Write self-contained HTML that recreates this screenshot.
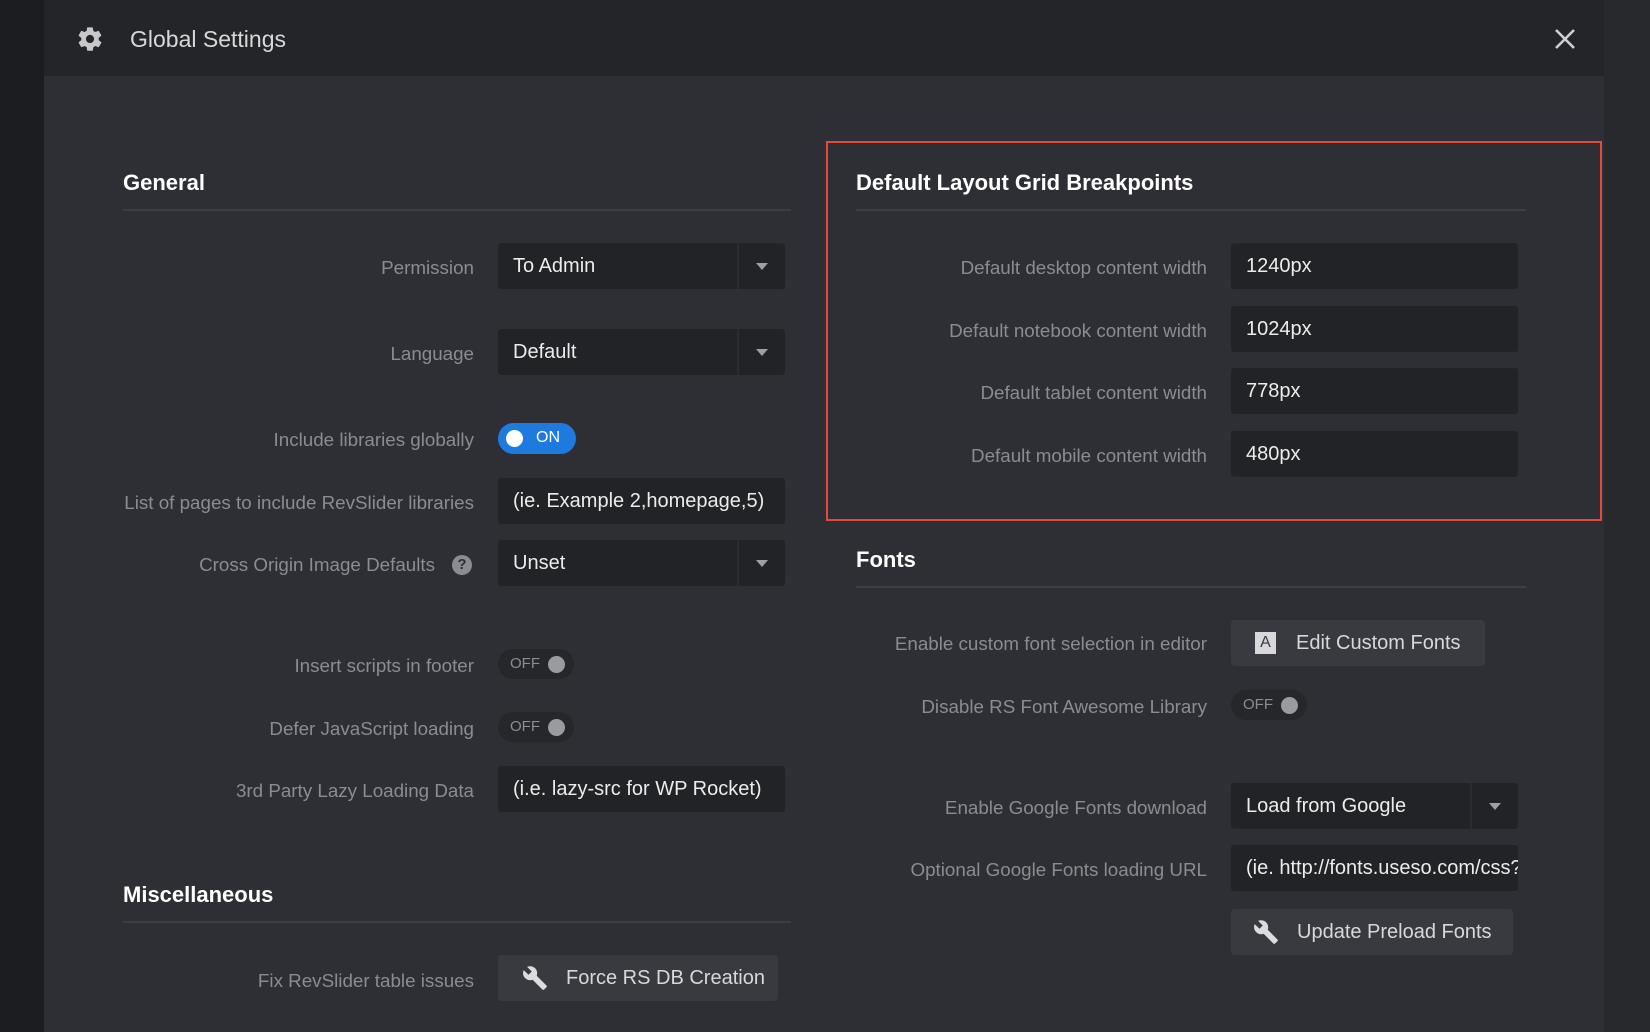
<!DOCTYPE html>
<html><head><meta charset="utf-8"><style>
*{box-sizing:border-box;margin:0;padding:0}
body{width:1650px;height:1032px;overflow:hidden;background:#1d1e21;font-family:"Liberation Sans",sans-serif;position:relative}
.side{position:absolute;left:0;top:0;width:44px;height:1032px;background:#1c1d20}
.rside{position:absolute;left:1604px;top:0;width:46px;height:1032px;background:#28292d}
.modal{position:absolute;left:44px;top:0;width:1560px;height:1032px;background:#2e2f34}
.hdr{position:absolute;left:0;top:0;width:1560px;height:76px;background:#242529}
.title{position:absolute;left:86px;top:26px;font-size:23px;color:#d8d8da}
.abs{position:absolute}
.h2{position:absolute;font-size:22px;font-weight:bold;color:#fff}
.line{position:absolute;height:2px;background:#3d3e44}
.lbl{position:absolute;font-size:18.8px;color:#8b8c91;text-align:right;transform:translateY(-50%);white-space:nowrap}
.inp{position:absolute;height:46px;background:#222327;color:#ececec;font-size:20px;line-height:46px;padding-left:15px;border-radius:3px;overflow:hidden;white-space:nowrap;transform:translateY(-50%)}
.dd{position:absolute;right:0;top:0;width:48px;height:46px;border-left:2px solid #2b2c31}
.dd:after{content:"";position:absolute;left:17px;top:20px;border:6px solid transparent;border-top:7px solid #a0a0a4;border-bottom:0}
.off{position:absolute;width:76px;height:30px;border-radius:15px;background:#26272b;transform:translateY(-50%);color:#8b8c91;font-size:15px;line-height:30px;padding-left:12px}
.off:after{content:"";position:absolute;right:9px;top:7px;width:17px;height:17px;border-radius:50%;background:#9a9b9f}
.btn{position:absolute;background:#393a40;color:#d8d8da;font-size:20px;border-radius:4px;display:flex;align-items:center}
.btn svg{margin-right:18px}
</style></head><body>
<div class="side"></div><div class="rside"></div>
<div class="modal">
<div class="hdr">
<svg class="abs" style="left:32px;top:25px" width="28" height="28" viewBox="0 0 24 24"><path fill="#c8c8ca" d="M19.4 13c.04-.33.06-.66.06-1s-.02-.67-.06-1l2.1-1.650a.5.5 0 0 0 .12-.64l-2-3.46a.5.5 0 0 0-.6-.22l-2.5 1a7.3 7.3 0 0 0-1.7-1l-.38-2.65A.5.5 0 0 0 14 2h-4a.5.5 0 0 0-.5.42l-.37 2.65c-.6.25-1.170.59-1.7 1l-2.5-1a.5.5 0 0 0-.6.22l-2 3.46a.5.5 0 0 0 .12.64L4.56 11c-.04.33-.06.67-.06 1s.02.67.06 1l-2.1 1.65a.5.5 0 0 0-.12.64l2 3.46c.12.22.38.3.6.22l2.5-1c.52.4 1.09.74 1.7 1l.37 2.65c.04.24.25.42.5.42h4c.25 0 .46-.18.5-.42l.37-2.65c.6-.26 1.18-.59 1.7-1l2.5 1c.22.08.48 0 .6-.22l2-3.46a.5.5 0 0 0-.12-.64L19.4 13zM12 15.5a3.5 3.5 0 1 1 0-7 3.5 3.5 0 0 1 0 7z"/></svg>
<div class="title">Global Settings</div>
<svg class="abs" style="left:1510px;top:28px" width="22" height="22" viewBox="0 0 22 22"><path d="M2 2L20 20M20 2L2 20" stroke="#d0d0d2" stroke-width="2.6"/></svg>
</div>
</div>
<!-- General -->
<div class="h2" style="left:123px;top:170px">General</div>
<div class="line" style="left:123px;top:209px;width:668px"></div>
<div class="lbl" style="right:1176px;top:268px">Permission</div>
<div class="inp" style="left:498px;top:266px;width:287px">To Admin<div class="dd"></div></div>
<div class="lbl" style="right:1176px;top:354px">Language</div>
<div class="inp" style="left:498px;top:352px;width:287px">Default<div class="dd"></div></div>
<div class="lbl" style="right:1176px;top:440px">Include libraries globally</div>
<div class="abs" style="left:498px;top:423px;width:78px;height:31px;border-radius:16px;background:#1f7ae0"><div class="abs" style="left:8px;top:7px;width:17px;height:17px;border-radius:50%;background:#fff"></div><div class="abs" style="left:38px;top:6px;color:#fff;font-size:16px">ON</div></div>
<div class="lbl" style="right:1176px;top:503px">List of pages to include RevSlider libraries</div>
<div class="inp" style="left:498px;top:501px;width:287px">(ie. Example 2,homepage,5)</div>
<div class="lbl" style="right:1215px;top:565px">Cross Origin Image Defaults</div>
<div class="abs" style="left:452px;top:555px;width:20px;height:20px;border-radius:50%;background:#8b8c91;color:#2e2f34;font-size:15px;font-weight:bold;text-align:center;line-height:20px">?</div>
<div class="inp" style="left:498px;top:563px;width:287px">Unset<div class="dd"></div></div>
<div class="lbl" style="right:1176px;top:666px">Insert scripts in footer</div>
<div class="off" style="left:498px;top:664px">OFF</div>
<div class="lbl" style="right:1176px;top:729px">Defer JavaScript loading</div>
<div class="off" style="left:498px;top:727px">OFF</div>
<div class="lbl" style="right:1176px;top:791px">3rd Party Lazy Loading Data</div>
<div class="inp" style="left:498px;top:789px;width:287px">(i.e. lazy-src for WP Rocket)</div>
<div class="h2" style="left:123px;top:882px">Miscellaneous</div>
<div class="line" style="left:123px;top:921px;width:668px"></div>
<div class="lbl" style="right:1176px;top:981px">Fix RevSlider table issues</div>
<div class="btn" style="left:498px;top:955px;width:280px;height:46px;padding-left:24px"><svg width="26" height="26" viewBox="0 0 24 24"><path fill="#dcdcde" d="M22.7 19l-9.1-9.1c.9-2.3.4-5-1.500-6.900-2-2-5-2.400-7.400-1.300L9 6 6 9 1.600 4.700C.4 7.100.9 10.100 2.900 12.100c1.900 1.900 4.600 2.400 6.900 1.500l9.100 9.100c.4.400 1 .4 1.400 0l2.300-2.300c.5-.4.5-1.100.1-1.400z"/></svg>Force RS DB Creation</div>
<!-- Right -->
<div class="abs" style="left:826px;top:141px;width:776px;height:380px;border:2px solid #e24a3b"></div>
<div class="h2" style="left:856px;top:170px">Default Layout Grid Breakpoints</div>
<div class="line" style="left:856px;top:209px;width:670px"></div>
<div class="lbl" style="right:443px;top:268px">Default desktop content width</div>
<div class="inp" style="left:1231px;top:266px;width:287px">1240px</div>
<div class="lbl" style="right:443px;top:331px">Default notebook content width</div>
<div class="inp" style="left:1231px;top:329px;width:287px">1024px</div>
<div class="lbl" style="right:443px;top:393px">Default tablet content width</div>
<div class="inp" style="left:1231px;top:391px;width:287px">778px</div>
<div class="lbl" style="right:443px;top:456px">Default mobile content width</div>
<div class="inp" style="left:1231px;top:454px;width:287px">480px</div>
<div class="h2" style="left:856px;top:547px">Fonts</div>
<div class="line" style="left:856px;top:586px;width:670px"></div>
<div class="lbl" style="right:443px;top:644px">Enable custom font selection in editor</div>
<div class="btn" style="left:1231px;top:620px;width:254px;height:46px;padding-left:24px"><span style="display:inline-block;width:21px;height:22px;background:#d8d8da;color:#393a40;font-size:16px;text-align:center;line-height:22px;margin-right:20px">A</span>Edit Custom Fonts</div>
<div class="lbl" style="right:443px;top:707px">Disable RS Font Awesome Library</div>
<div class="off" style="left:1231px;top:705px">OFF</div>
<div class="lbl" style="right:443px;top:808px">Enable Google Fonts download</div>
<div class="inp" style="left:1231px;top:806px;width:287px">Load from Google<div class="dd"></div></div>
<div class="lbl" style="right:443px;top:870px">Optional Google Fonts loading URL</div>
<div class="inp" style="left:1231px;top:868px;width:287px;padding-right:12px;text-overflow:clip">(ie. http://fonts.useso.com/css?</div>
<div class="btn" style="left:1231px;top:909px;width:282px;height:46px;padding-left:22px"><svg width="26" height="26" viewBox="0 0 24 24"><path fill="#dcdcde" d="M22.7 19l-9.1-9.1c.9-2.3.4-5-1.500-6.900-2-2-5-2.400-7.400-1.300L9 6 6 9 1.600 4.700C.4 7.100.9 10.100 2.900 12.100c1.900 1.900 4.600 2.400 6.900 1.500l9.100 9.100c.4.400 1 .4 1.400 0l2.300-2.300c.5-.4.5-1.100.1-1.400z"/></svg>Update Preload Fonts</div>
</body></html>
